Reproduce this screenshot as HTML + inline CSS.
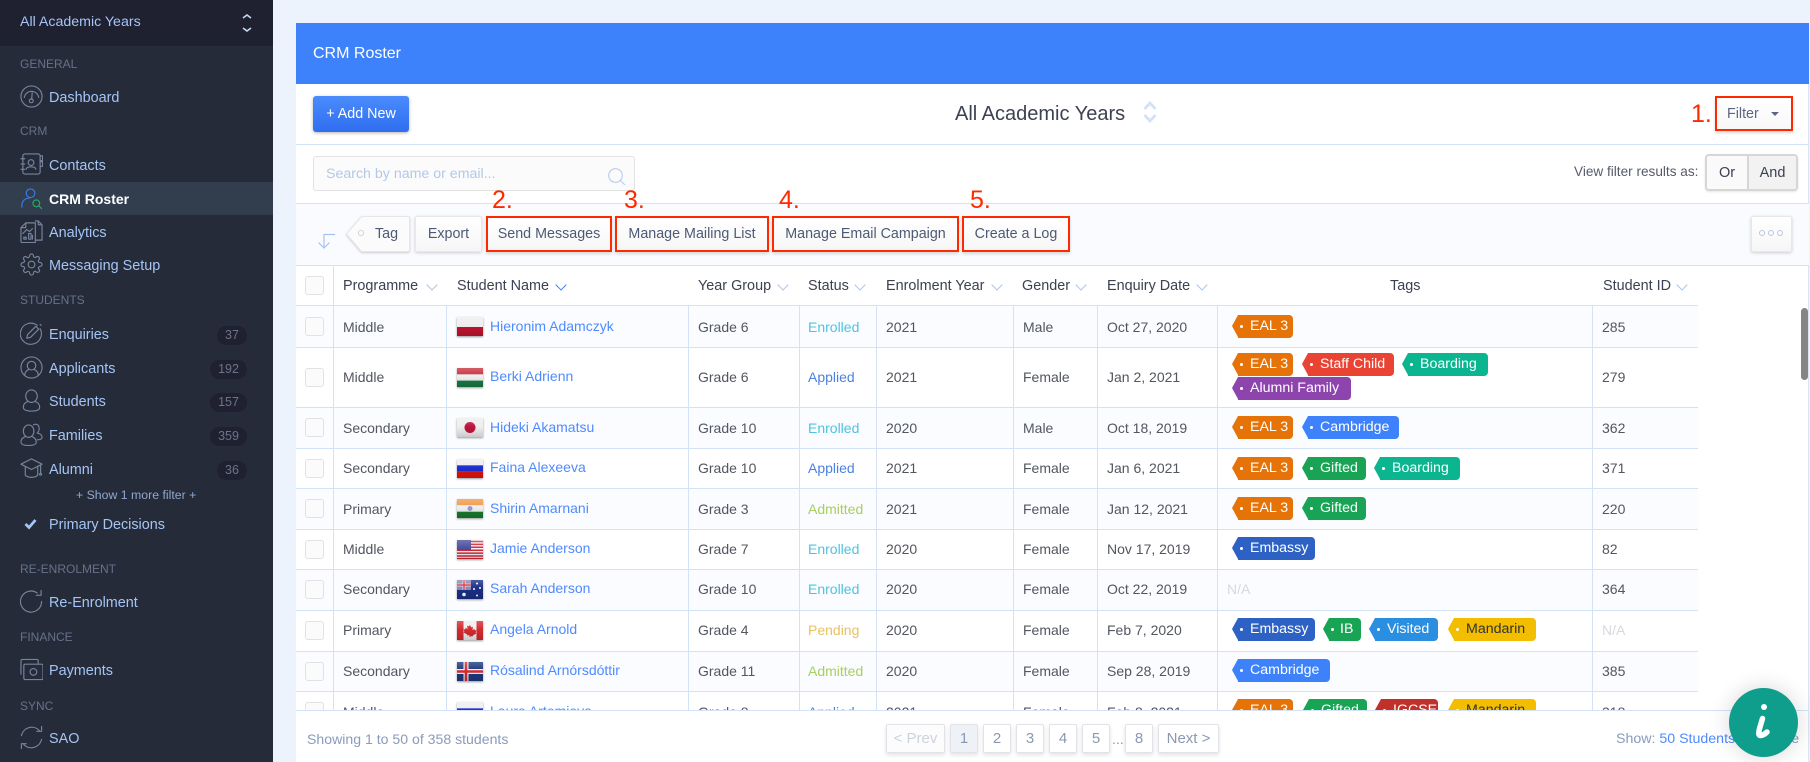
<!DOCTYPE html>
<html><head><meta charset="utf-8"><title>CRM Roster</title>
<style>
*{box-sizing:border-box}
html,body{margin:0;padding:0;width:1810px;height:762px;overflow:hidden;background:#edf3fd;font-family:"Liberation Sans",sans-serif}
.a{position:absolute;white-space:nowrap}
#side{position:absolute;left:0;top:0;width:273px;height:762px;background:#252b39}
#side .top{position:absolute;left:0;top:0;width:273px;height:46px;background:#1f2030}
.sec{position:absolute;left:20px;margin-top:1px;font-size:12px;line-height:14px;color:#667289;white-space:nowrap}
.nav{position:absolute;left:49px;margin-top:1px;font-size:14.4px;line-height:20px;color:#a4c5f5;white-space:nowrap}
.ic{position:absolute;left:20px;width:23px;height:23px;fill:none;stroke:#76859d;stroke-width:1.2;stroke-linecap:round;stroke-linejoin:round}
.bd{position:absolute;height:19px;border-radius:10px;background:#1f2030;color:#6d7488;font-size:12.5px;line-height:19px;text-align:center}
#card{position:absolute;left:296px;top:23px;width:1513px;height:739px;background:#fff;border-right:1px solid #dbe5f7}
.hl{position:absolute;height:1px;background:#d3e2f7}
.btn{position:absolute;top:216px;height:36px;background:linear-gradient(#fff,#f6f6f6);border:1px solid #e8e8e8;border-radius:2px;box-shadow:0 1px 3px rgba(0,0,0,.18);color:#4d5a75;font-size:14.3px;line-height:33px;text-align:center;white-space:nowrap}
.red{border:2px solid #fd2a00;border-radius:0;box-shadow:0 2px 3px rgba(0,0,0,.15)}
.num{position:absolute;color:#fd2a00;font-size:25px;line-height:25px;white-space:nowrap}
.th{position:absolute;top:265px;line-height:42px;font-size:14.4px;color:#3b4150;white-space:nowrap}
.ch{position:absolute;top:281px;width:8px;height:8px;border-right:1px solid #a9c3e8;border-bottom:1px solid #a9c3e8;transform:rotate(45deg)}
#tb{position:absolute;left:296px;top:0;width:1402px;height:710px;overflow:hidden}
.r{position:absolute;left:0;width:1402px;border-top:1px solid #d3e2f7;font-size:14px;color:#52565f;background:#fff}
.s{background:#fafcff}
.r span{position:absolute;top:0;white-space:nowrap}
.c0{position:absolute;left:9px;top:50%;margin-top:-10px;width:19px;height:19px;border:1px solid #e2e2e2;border-radius:3px;background:#fbfbfb}
.f{position:absolute;left:161px;top:50%;margin-top:-10px;width:26px;height:19px;box-shadow:0 1px 2px rgba(0,0,0,.4);overflow:hidden}
.f svg{display:block;width:26px;height:19px}
.f:after{content:"";position:absolute;inset:0;background:linear-gradient(rgba(255,255,255,.22),rgba(255,255,255,0) 45%,rgba(0,0,0,.15))}
.c1{left:47px}.n{left:194px;color:#4f8bff;margin-top:-1px}.c3{left:402px}.c4{left:512px}.c5{left:590px}.c6{left:727px}.c7{left:811px}.c9{left:1306px}
.en{color:#4fc3e0}.ap{color:#4d80e0}.ad{color:#a8cf5a}.pe{color:#e9c25f}.na{color:#d6d9de}
.t{position:absolute;display:block;height:23px;margin-left:6px;background:var(--c);border-radius:0 4px 4px 0;padding-left:12px;color:#fff;line-height:22px;font-size:14.2px;white-space:nowrap}
.t:before{content:"";position:absolute;left:-6px;top:0;border:solid transparent;border-width:11.5px 6px 11.5px 0;border-right-color:var(--c)}
.t:after{content:"";position:absolute;left:2px;top:10px;width:3px;height:3px;border-radius:50%;background:#fff}
.eal{--c:#e67308}.sc{--c:#e94334}.bo{--c:#0bb58f}.al{--c:#8e44ad}.ca{--c:#3d82fb}.gi{--c:#18a454}.em{--c:#2d62c4}.vi{--c:#2a8fe0}.ma{--c:#f3bd00;color:#333}.ig{--c:#c0312a}
.vl{position:absolute;width:1px;background:#d3e2f7;top:305px;height:405px}
.pg{position:absolute;top:724px;height:29px;background:#fff;border:1px solid #e1e3e8;border-radius:2px;box-shadow:0 2px 4px rgba(0,0,0,.12);color:#8b98b2;font-size:15px;line-height:27px;text-align:center}
</style></head><body>

<div id="side">
<div class="top"></div>
<div class="a" style="left:20px;top:12px;font-size:14.2px;line-height:20px;color:#a4c5f5">All Academic Years</div>
<svg class="a" style="left:241px;top:13px" width="12" height="20" fill="none" stroke="#c9d8ee" stroke-width="1.6"><path d="M2 5l4-3 4 3M2 15l4 3 4-3"/></svg>
<div style="position:absolute;left:0;top:182px;width:273px;height:33px;background:#323e4e"></div>

<div class="sec" style="top:56px">GENERAL</div>
<svg class="ic" style="top:85px" viewBox="0 0 24 24"><circle cx="12" cy="12" r="11"/><path d="M4.5 13a7.6 7.6 0 0 1 15 0"/><path d="M12.2 15l.5-7"/><circle cx="11.8" cy="16.5" r="2"/></svg>
<div class="nav" style="top:87px">Dashboard</div>

<div class="sec" style="top:123px">CRM</div>
<svg class="ic" style="top:153px" viewBox="0 0 24 24"><rect x="3" y="1" width="18" height="21" rx="2"/><circle cx="11.5" cy="10" r="3"/><path d="M6.5 17c0-3.500 10-3.500 10 0M1 6h4M1 11.500h4M1 17h4M21 3h2.500v5H21M21 9h2.500v5H21"/></svg>
<div class="nav" style="top:155px">Contacts</div>

<svg class="ic" style="top:187px;stroke:#3a7bf0" viewBox="0 0 24 24"><circle cx="11" cy="6.500" r="4.500"/><path d="M2 21v-2c0-5 4-7.500 8-7.500"/><g stroke="#1fae62"><circle cx="17" cy="17" r="3.500"/><path d="M19.500 19.500l3 3"/></g></svg>
<div class="nav" style="top:188px;color:#fff;font-weight:bold;font-size:14px">CRM Roster</div>

<svg class="ic" style="top:220px" viewBox="0 0 24 24"><path d="M1 8l5-5h10v20.500H2a1 1 0 0 1-1-1zM1 8h5V3M16 1h3l4 4v16h-7M19 1v4h4M4 20v-2h2.500v2zM9 20v-6h2.500v6zM13 20v-4"/><path d="M3 14l4-4 3 2 3-3"/></svg>
<div class="nav" style="top:222px">Analytics</div>

<svg class="ic" style="top:253px" viewBox="0 0 24 24"><circle cx="12" cy="12" r="3.500"/><path d="M19.400 15a1.650 1.650 0 0 0 .33 1.820l.06.06a2 2 0 0 1 0 2.830 2 2 0 0 1-2.830 0l-.06-.06a1.650 1.650 0 0 0-1.820-.33 1.650 1.650 0 0 0-1 1.510V21a2 2 0 0 1-2 2 2 2 0 0 1-2-2v-.09A1.650 1.650 0 0 0 9 19.400a1.650 1.650 0 0 0-1.820.33l-.06.06a2 2 0 0 1-2.830 0 2 2 0 0 1 0-2.830l.06-.06a1.650 1.650 0 0 0 .33-1.820 1.650 1.650 0 0 0-1.510-1H3a2 2 0 0 1-2-2 2 2 0 0 1 2-2h.09A1.650 1.650 0 0 0 4.600 9a1.650 1.650 0 0 0-.33-1.820l-.06-.06a2 2 0 0 1 0-2.830 2 2 0 0 1 2.830 0l.06.06a1.650 1.650 0 0 0 1.820.33H9a1.650 1.650 0 0 0 1-1.510V3a2 2 0 0 1 2-2 2 2 0 0 1 2 2v.09a1.650 1.650 0 0 0 1 1.510 1.650 1.650 0 0 0 1.820-.33l.06-.06a2 2 0 0 1 2.830 0 2 2 0 0 1 0 2.830l-.06.06a1.650 1.650 0 0 0-.33 1.820V9a1.650 1.650 0 0 0 1.510 1H21a2 2 0 0 1 2 2 2 2 0 0 1-2 2h-.09a1.650 1.650 0 0 0-1.510 1z"/></svg>
<div class="nav" style="top:255px">Messaging Setup</div>

<div class="sec" style="top:292px">STUDENTS</div>
<svg class="ic" style="top:322px" viewBox="0 0 24 24"><path d="M18 3.500A11 11 0 1 0 21 7"/><path d="M7 17l1-4 8.500-8.500 3 3L11 16zM21 2.500l1 1"/></svg>
<div class="nav" style="top:324px">Enquiries</div><div class="bd" style="left:217px;top:326px;width:30px">37</div>

<svg class="ic" style="top:356px" viewBox="0 0 24 24"><circle cx="12" cy="12" r="11"/><circle cx="12" cy="10" r="4.500"/><path d="M5 20c0-4 3-5.500 4.500-6M19 20c0-4-3-5.500-4.500-6"/></svg>
<div class="nav" style="top:358px">Applicants</div><div class="bd" style="left:210px;top:360px;width:37px">192</div>

<svg class="ic" style="top:389px" viewBox="0 0 24 24"><ellipse cx="12" cy="7.500" rx="6" ry="6.500"/><path d="M8.500 13C5 14 3.500 16 3.500 19c0 3 3 4 8.500 4s8.500-1 8.500-4c0-3-1.500-5-5-6"/></svg>
<div class="nav" style="top:391px">Students</div><div class="bd" style="left:210px;top:393px;width:37px">157</div>

<svg class="ic" style="top:423px" viewBox="0 0 24 24"><ellipse cx="9" cy="8.500" rx="5.500" ry="6.500"/><path d="M6 14C3 15 1 17 1 20c0 2.500 3 3.500 8 3.500s8-1 8-3.500c0-3-2-5-5-6M14 2c2-1.500 6-1 6 4 0 2-1 3.500-2 4.500 3 .5 5 2 5 4.500 0 1.500-2 2.500-5 2.500"/></svg>
<div class="nav" style="top:425px">Families</div><div class="bd" style="left:210px;top:427px;width:37px">359</div>

<svg class="ic" style="top:457px" viewBox="0 0 24 24"><path d="M1 7.500L12 2l11 5.500L12 13zM5.500 10v9c3 3 10 3 13 0v-9M21.500 8.500v8"/><circle cx="21.500" cy="18" r="1"/></svg>
<div class="nav" style="top:459px">Alumni</div><div class="bd" style="left:217px;top:461px;width:30px">36</div>

<div class="a" style="left:76px;top:486px;font-size:12.3px;line-height:18px;color:#8fa8cf">+ Show 1 more filter +</div>
<svg class="a" style="left:24px;top:518px" width="13" height="12" fill="none" stroke="#a4c5f5" stroke-width="2.800"><path d="M1.500 6l3.500 3.500L11.500 2"/></svg>
<div class="nav" style="top:514px">Primary Decisions</div>

<div class="sec" style="top:561px">RE-ENROLMENT</div>
<svg class="ic" style="top:590px" viewBox="0 0 24 24"><path d="M22.500 12A11 11 0 1 1 18 3.200M22 .5v5h-5"/></svg>
<div class="nav" style="top:592px">Re-Enrolment</div>

<div class="sec" style="top:629px">FINANCE</div>
<svg class="ic" style="top:658px" viewBox="0 0 24 24"><rect x="4" y="6.500" width="20" height="16" rx="1.500"/><circle cx="14" cy="14.500" r="3.500"/><path d="M1 17V3a1.500 1.500 0 0 1 1.500-1.500h15A1.500 1.500 0 0 1 19 3v3.500"/></svg>
<div class="nav" style="top:660px">Payments</div>

<div class="sec" style="top:698px">SYNC</div>
<svg class="ic" style="top:726px" viewBox="0 0 24 24"><path d="M1.500 10A11 11 0 0 1 20 4.500M22.500 .5v5h-5M22.500 14A11 11 0 0 1 4 19.500M1.500 23.500v-5h5"/></svg>
<div class="nav" style="top:728px">SAO</div>
</div>

<div id="card"></div>
<div class="a" style="left:296px;top:23px;width:1513px;height:61px;background:#3e82fb"></div>
<div class="a" style="left:313px;top:44px;font-size:16px;line-height:20px;color:#fff">CRM Roster</div>
<div class="a" style="left:313px;top:96px;width:96px;height:36px;border-radius:3px;background:linear-gradient(#4a8cfc,#2f6ef0);box-shadow:0 1px 3px rgba(0,0,0,.3);color:#fff;font-size:14.300px;line-height:37px;text-align:center">+ Add New</div>
<div class="a" style="left:955px;top:101px;font-size:20px;line-height:26px;color:#3d4250">All Academic Years</div>
<svg class="a" style="left:1143px;top:100px" width="14" height="24" fill="none" stroke="#d3e2f8" stroke-width="2.800"><path d="M1.500 9L7 3l5.500 6M1.500 15L7 21l5.500-6"/></svg>
<div class="hl" style="left:296px;top:144px;width:1513px"></div>

<div class="num" style="left:1691px;top:102px">1.</div>
<div class="a" style="left:1715px;top:96px;width:78px;height:35px;border:2px solid #fd2a00;background:linear-gradient(#fff,#f8f8f8);box-shadow:0 2px 3px rgba(0,0,0,.15)"></div>
<div class="a" style="left:1727px;top:104px;font-size:14.300px;line-height:20px;color:#5c6680">Filter</div>
<div class="a" style="left:1771px;top:112px;width:0;height:0;border:solid transparent;border-width:4px 4px 0;border-top-color:#5c6680"></div>

<div class="a" style="left:313px;top:156px;width:322px;height:35px;background:#fbfbfb;border:1px solid #e2e2e2;border-radius:3px"></div>
<div class="a" style="left:326px;top:164px;font-size:14.200px;line-height:20px;color:#b3c8e8">Search by name or email...</div>
<svg class="a" style="left:607px;top:167px" width="20" height="20" fill="none" stroke="#b7cdec" stroke-width="1.100"><circle cx="8.500" cy="8.500" r="6.800"/><path d="M13.500 13.500l4.500 4.500"/></svg>

<div class="a" style="left:1574px;top:162px;font-size:13.600px;line-height:20px;color:#575b69">View filter results as:</div>
<div class="a" style="left:1705px;top:154px;width:93px;height:37px;border:2px solid #d6d6d6;border-radius:4px;background:#fafafa;box-shadow:0 1px 2px rgba(0,0,0,.1)">
<div style="position:absolute;left:40px;top:0;width:2px;height:33px;background:#d6d6d6"></div>
<div style="position:absolute;left:42px;top:0;width:47px;height:33px;background:#f2f2f2;border-radius:0 2px 2px 0"></div>
<div style="position:absolute;left:0;top:0;width:40px;font-size:14.500px;line-height:34px;text-align:center;color:#3b4150">Or</div>
<div style="position:absolute;left:42px;top:0;width:47px;font-size:14.500px;line-height:35px;text-align:center;color:#3b4150">And</div>
</div>

<div class="hl" style="left:296px;top:203px;width:1513px"></div>
<div class="a" style="left:296px;top:204px;width:1513px;height:61px;background:#fafbff"></div>
<div class="hl" style="left:296px;top:265px;width:1513px"></div>

<div class="num" style="left:492px;top:188px">2.</div>
<div class="num" style="left:624px;top:188px">3.</div>
<div class="num" style="left:779px;top:188px">4.</div>
<div class="num" style="left:970px;top:188px">5.</div>

<svg class="a" style="left:316px;top:232px" width="20" height="18" fill="none" stroke="#a6c3ee" stroke-width="1.200"><path d="M19 2.500H8V16M2.500 10.500L8 16l5.500-5.500"/></svg>
<svg class="a" style="left:344px;top:214px;filter:drop-shadow(0 1px 1px rgba(0,0,0,.18))" width="68" height="40"><path d="M2.500 20L17.500 2.500H64a1.500 1.500 0 0 1 1.500 1.500V36a1.500 1.500 0 0 1-1.500 1.500H17.500z" fill="#fbfbfb" stroke="#e6e6e6"/><circle cx="17" cy="19" r="2.700" fill="none" stroke="#d6d6d6"/></svg>
<div class="a" style="left:375px;top:224px;font-size:14.300px;line-height:20px;color:#4d5a75">Tag</div>
<div class="btn" style="left:415px;width:67px;line-height:35px">Export</div>
<div class="btn red" style="left:486px;width:126px">Send Messages</div>
<div class="btn red" style="left:615px;width:154px">Manage Mailing List</div>
<div class="btn red" style="left:772px;width:187px">Manage Email Campaign</div>
<div class="btn red" style="left:962px;width:108px">Create a Log</div>
<div class="btn" style="left:1751px;width:41px"></div>
<svg class="a" style="left:1757px;top:228px" width="30" height="10" fill="none" stroke="#b8c7e4"><circle cx="5" cy="5" r="2.500"/><circle cx="14" cy="5" r="2.500"/><circle cx="23" cy="5" r="2.500"/></svg>

<div id="tb">
<div class="r s" style="top:305px;height:42px;line-height:42px"><i class="c0"></i><span class="c1">Middle</span><i class="f"><svg viewBox="0 0 26 19"><rect width="26" height="10" fill="#eee"/><rect y="10" width="26" height="9" fill="#c0142f"/></svg></i><span class="n">Hieronim Adamczyk</span><span class="c3">Grade 6</span><span class="c4 en">Enrolled</span><span class="c5">2021</span><span class="c6">Male</span><span class="c7">Oct 27, 2020</span>
<div style="position:absolute;left:936px;top:0"><b class="t eal" style="left:0;top:9px;width:55px;font-weight:normal">EAL 3</b></div><span class="c9">285</span></div>

<div class="r" style="top:347px;height:60px;line-height:59px"><i class="c0"></i><span class="c1">Middle</span><i class="f"><svg viewBox="0 0 26 19"><rect width="26" height="7" fill="#c8303f"/><rect y="6.300" width="26" height="6.300" fill="#eee"/><rect y="12.600" width="26" height="6.400" fill="#1a7a45"/></svg></i><span class="n">Berki Adrienn</span><span class="c3">Grade 6</span><span class="c4 ap">Applied</span><span class="c5">2021</span><span class="c6">Female</span><span class="c7">Jan 2, 2021</span>
<div style="position:absolute;left:936px;top:0"><b class="t eal" style="left:0;top:5px;width:55px;font-weight:normal">EAL 3</b><b class="t sc" style="left:70px;top:5px;width:86px;font-weight:normal">Staff Child</b><b class="t bo" style="left:170px;top:5px;width:80px;font-weight:normal">Boarding</b><b class="t al" style="left:0;top:29px;width:113px;font-weight:normal">Alumni Family</b></div><span class="c9">279</span></div>

<div class="r s" style="top:407px;height:41px;line-height:40px"><i class="c0"></i><span class="c1">Secondary</span><i class="f"><svg viewBox="0 0 26 19"><rect width="26" height="19" fill="#eee"/><circle cx="13" cy="9.500" r="5.500" fill="#c0143c"/></svg></i><span class="n">Hideki Akamatsu</span><span class="c3">Grade 10</span><span class="c4 en">Enrolled</span><span class="c5">2020</span><span class="c6">Male</span><span class="c7">Oct 18, 2019</span>
<div style="position:absolute;left:936px;top:0"><b class="t eal" style="left:0;top:8px;width:55px;font-weight:normal">EAL 3</b><b class="t ca" style="left:70px;top:8px;width:91px;font-weight:normal">Cambridge</b></div><span class="c9">362</span></div>

<div class="r" style="top:448px;height:40px;line-height:39px"><i class="c0"></i><span class="c1">Secondary</span><i class="f"><svg viewBox="0 0 26 19"><rect width="26" height="6.300" fill="#eee"/><rect y="6.300" width="26" height="6.400" fill="#1c2fd0"/><rect y="12.700" width="26" height="6.300" fill="#e0140f"/></svg></i><span class="n">Faina Alexeeva</span><span class="c3">Grade 10</span><span class="c4 ap">Applied</span><span class="c5">2021</span><span class="c6">Female</span><span class="c7">Jan 6, 2021</span>
<div style="position:absolute;left:936px;top:0"><b class="t eal" style="left:0;top:8px;width:55px;font-weight:normal">EAL 3</b><b class="t gi" style="left:70px;top:8px;width:58px;font-weight:normal">Gifted</b><b class="t bo" style="left:142px;top:8px;width:80px;font-weight:normal">Boarding</b></div><span class="c9">371</span></div>

<div class="r s" style="top:488px;height:41px;line-height:40px"><i class="c0"></i><span class="c1">Primary</span><i class="f"><svg viewBox="0 0 26 19"><rect width="26" height="6.300" fill="#f2994a"/><rect y="6.300" width="26" height="6.400" fill="#eee"/><rect y="12.700" width="26" height="6.300" fill="#1a7a2c"/><circle cx="13" cy="9.500" r="2.500" fill="#9a9ad0"/></svg></i><span class="n">Shirin Amarnani</span><span class="c3">Grade 3</span><span class="c4 ad">Admitted</span><span class="c5">2021</span><span class="c6">Female</span><span class="c7">Jan 12, 2021</span>
<div style="position:absolute;left:936px;top:0"><b class="t eal" style="left:0;top:8px;width:55px;font-weight:normal">EAL 3</b><b class="t gi" style="left:70px;top:8px;width:58px;font-weight:normal">Gifted</b></div><span class="c9">220</span></div>

<div class="r" style="top:529px;height:40px;line-height:39px"><i class="c0"></i><span class="c1">Middle</span><i class="f"><svg viewBox="0 0 26 19"><rect width="26" height="19" fill="#f4f4f4"/><path d="M0 1.500h26M0 4.400h26M0 7.300h26M0 10.200h26M0 13.100h26M0 16h26M0 18.600h26" stroke="#d42a3c" stroke-width="1.500"/><rect width="14" height="10" fill="#4a4f9e"/></svg></i><span class="n">Jamie Anderson</span><span class="c3">Grade 7</span><span class="c4 en">Enrolled</span><span class="c5">2020</span><span class="c6">Female</span><span class="c7">Nov 17, 2019</span>
<div style="position:absolute;left:936px;top:0"><b class="t em" style="left:0;top:7px;width:77px;font-weight:normal">Embassy</b></div><span class="c9">82</span></div>

<div class="r s" style="top:569px;height:41px;line-height:39px"><i class="c0"></i><span class="c1">Secondary</span><i class="f"><svg viewBox="0 0 26 19"><rect width="26" height="19" fill="#1a2f85"/><rect width="14" height="10" fill="#8a8ab8"/><path d="M0 5h14M7 0v10" stroke="#fff" stroke-width="2.600"/><path d="M0 5h14M7 0v10" stroke="#d42a3c" stroke-width="1.400"/><circle cx="7" cy="14.500" r="1.800" fill="#fff"/><circle cx="20" cy="3.500" r="1" fill="#fff"/><circle cx="23" cy="8" r="1" fill="#fff"/><circle cx="17" cy="9" r="1" fill="#fff"/><circle cx="20" cy="15.500" r="1" fill="#fff"/></svg></i><span class="n">Sarah Anderson</span><span class="c3">Grade 10</span><span class="c4 en">Enrolled</span><span class="c5">2020</span><span class="c6">Female</span><span class="c7">Oct 22, 2019</span><span class="na" style="left:931px">N/A</span><span class="c9">364</span></div>

<div class="r" style="top:610px;height:41px;line-height:39px"><i class="c0"></i><span class="c1">Primary</span><i class="f"><svg viewBox="0 0 26 19"><rect width="26" height="19" fill="#eee"/><rect width="6.500" height="19" fill="#d42a2f"/><rect x="19.500" width="6.500" height="19" fill="#d42a2f"/><path d="M13 4l1.300 2.400 1.700-.7-.6 3.400 2-1.300.4 1.600 1.700-.2-.8 2.400.8.800-3.500 2-.5 1.100-2-.4V16h-1v-1.900l-2 .4-.5-1.100-3.500-2 .8-.8-.8-2.400 1.700.2.400-1.600 2 1.300-.6-3.400 1.700.7z" fill="#d42a2f"/></svg></i><span class="n">Angela Arnold</span><span class="c3">Grade 4</span><span class="c4 pe">Pending</span><span class="c5">2020</span><span class="c6">Female</span><span class="c7">Feb 7, 2020</span>
<div style="position:absolute;left:936px;top:0"><b class="t em" style="left:0;top:7px;width:77px;font-weight:normal">Embassy</b><b class="t gi" style="left:91px;top:7px;width:32px;font-weight:normal;padding-left:11px">IB</b><b class="t vi" style="left:137px;top:7px;width:63px;font-weight:normal">Visited</b><b class="t ma" style="left:216px;top:7px;width:82px;font-weight:normal">Mandarin</b></div><span class="c9 na">N/A</span></div>

<div class="r s" style="top:651px;height:40px;line-height:39px"><i class="c0"></i><span class="c1">Secondary</span><i class="f"><svg viewBox="0 0 26 19"><rect width="26" height="19" fill="#1d3a80"/><path d="M0 9.500h26M9 0v19" stroke="#eee" stroke-width="5"/><path d="M0 9.500h26M9 0v19" stroke="#d42a2f" stroke-width="2.600"/></svg></i><span class="n">Rósalind Arnórsdóttir</span><span class="c3">Grade 11</span><span class="c4 ad">Admitted</span><span class="c5">2020</span><span class="c6">Female</span><span class="c7">Sep 28, 2019</span>
<div style="position:absolute;left:936px;top:0"><b class="t ca" style="left:0;top:7px;width:92px;font-weight:normal">Cambridge</b></div><span class="c9">385</span></div>

<div class="r" style="top:691px;height:41px;line-height:40px"><i class="c0"></i><span class="c1">Middle</span><i class="f"><svg viewBox="0 0 26 19"><rect width="26" height="6.300" fill="#eee"/><rect y="6.300" width="26" height="6.400" fill="#1c2fd0"/><rect y="12.700" width="26" height="6.300" fill="#e0140f"/></svg></i><span class="n">Laura Artemieva</span><span class="c3">Grade 8</span><span class="c4 ap">Applied</span><span class="c5">2021</span><span class="c6">Female</span><span class="c7">Feb 8, 2021</span>
<div style="position:absolute;left:936px;top:0"><b class="t eal" style="left:0;top:7px;width:55px;font-weight:normal">EAL 3</b><b class="t gi" style="left:71px;top:7px;width:58px;font-weight:normal">Gifted</b><b class="t ig" style="left:143px;top:7px;width:57px;font-weight:normal">IGCSE</b><b class="t ma" style="left:216px;top:7px;width:82px;font-weight:normal">Mandarin</b></div><span class="c9">318</span></div>
</div>

<div class="vl" style="left:333px;top:265px;height:445px"></div>
<div class="vl" style="left:446px"></div><div class="vl" style="left:688px"></div><div class="vl" style="left:799px"></div><div class="vl" style="left:876px"></div><div class="vl" style="left:1013px"></div><div class="vl" style="left:1097px"></div><div class="vl" style="left:1217px"></div><div class="vl" style="left:1592px"></div>
<div class="hl" style="left:296px;top:305px;width:1402px"></div>

<div class="a" style="left:305px;top:276px;width:19px;height:19px;border:1px solid #e2e2e2;border-radius:3px;background:#fbfbfb"></div>
<div class="th" style="left:343px">Programme</div><i class="ch" style="left:428px"></i>
<div class="th" style="left:457px">Student Name</div><i class="ch" style="left:557px;border-color:#3f80f5"></i>
<div class="th" style="left:698px">Year Group</div><i class="ch" style="left:779px"></i>
<div class="th" style="left:808px">Status</div><i class="ch" style="left:856px"></i>
<div class="th" style="left:886px">Enrolment Year</div><i class="ch" style="left:993px"></i>
<div class="th" style="left:1022px">Gender</div><i class="ch" style="left:1077px"></i>
<div class="th" style="left:1107px">Enquiry Date</div><i class="ch" style="left:1198px"></i>
<div class="th" style="left:1390px">Tags</div>
<div class="th" style="left:1603px">Student ID</div><i class="ch" style="left:1678px"></i>

<div class="a" style="left:1801px;top:308px;width:7px;height:72px;border-radius:4px;background:#858585"></div>

<div class="hl" style="left:296px;top:710px;width:1513px"></div>
<div class="a" style="left:307px;top:729px;font-size:14.100px;line-height:20px;color:#8a9bbd">Showing 1 to 50 of 358 students</div>
<div class="pg" style="left:886px;width:59px;color:#ccd2dc;background:#fcfcfc">&lt; Prev</div>
<div class="pg" style="left:950px;width:28px;background:#eef1f6">1</div>
<div class="pg" style="left:983px;width:28px">2</div>
<div class="pg" style="left:1016px;width:28px">3</div>
<div class="pg" style="left:1049px;width:28px">4</div>
<div class="pg" style="left:1082px;width:28px">5</div>
<div class="a" style="left:1112px;top:729px;font-size:14px;line-height:20px;color:#8b98b2">...</div>
<div class="pg" style="left:1125px;width:28px">8</div>
<div class="pg" style="left:1158px;width:61px">Next &gt;</div>

<div class="a" style="left:1616px;top:729px;font-size:14.200px;line-height:20px;color:#8a9bbd">Show: <span style="color:#4f8bff">50 Students</span></div>
<div class="a" style="left:1740px;top:729px;width:57px;text-align:right;font-size:14.200px;line-height:20px;color:#8a9bbd">Per Page</div>

<div class="a" style="left:1729px;top:688px;width:69px;height:69px;border-radius:50%;background:#0f9d8c;box-shadow:0 0 22px rgba(0,0,0,.16)"></div>
<svg class="a" style="left:1729px;top:688px" width="69" height="69" fill="none"><circle cx="35" cy="19" r="3" fill="#fff"/><path d="M33.500 30.500C32 36 29 44 30 46.500c1 2 5 .5 8-2.500" stroke="#fff" stroke-width="5.500" stroke-linecap="round"/></svg>
</body></html>
